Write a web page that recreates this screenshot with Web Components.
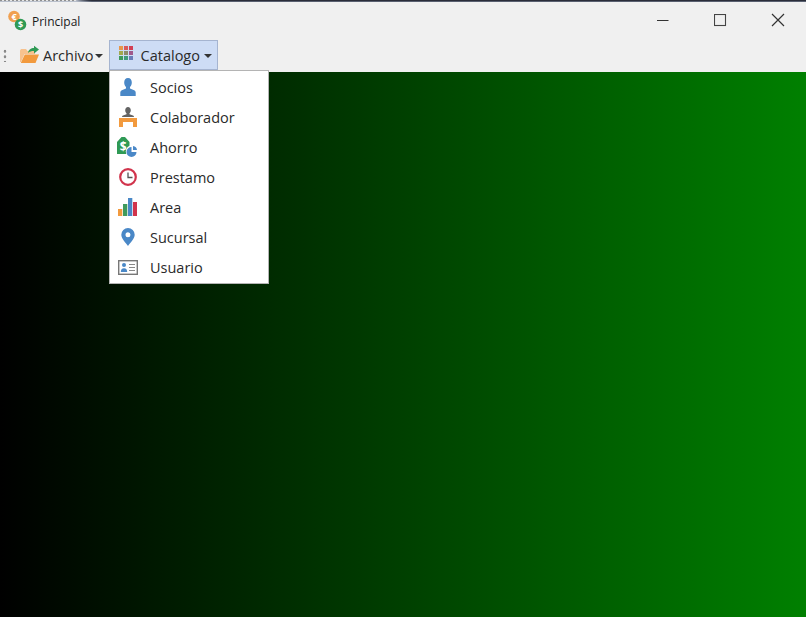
<!DOCTYPE html>
<html lang="es"><head><meta charset="utf-8"><title>Principal</title>
<style>html,body{margin:0;height:100%;background:#f0f0f0;overflow:hidden}body{font-family:"Open Sans","Liberation Sans",sans-serif}</style>
</head><body>
<app-window>
  <title-bar slot="title" label="Principal"></title-bar>
  <tool-bar slot="tools">
    <tool-button label="Archivo" icon="folder"></tool-button>
    <tool-button label="Catalogo" icon="grid" active></tool-button>
  </tool-bar>
  <drop-menu slot="menu">
    <menu-row label="Socios" icon="user"></menu-row>
    <menu-row label="Colaborador" icon="desk"></menu-row>
    <menu-row label="Ahorro" icon="tag"></menu-row>
    <menu-row label="Prestamo" icon="clock"></menu-row>
    <menu-row label="Area" icon="bars"></menu-row>
    <menu-row label="Sucursal" icon="pin"></menu-row>
    <menu-row label="Usuario" icon="card"></menu-row>
  </drop-menu>
</app-window>
<script>
const ICONS={
folder:`<svg width="22" height="20" viewBox="0 0 22 20"><path d="M1 5.500 2 4h5l1.500 2H16v3H5.500L2 17H1z" fill="#f7c28e"/><path d="M5.800 9.500H20L16.500 18H1.800z" fill="#f29a3e"/><path d="M9 8C9.500 4.500 12 3 15 3V.8L20 4.600 15 8.500V6C12.500 6 10.500 6.500 9 8Z" fill="#2f9a55"/></svg>`,
grid:`<svg width="15" height="15" viewBox="0 0 15 15"><g><rect x="0" y="0" width="4" height="4" fill="#e8964a"/><rect x="5" y="0" width="4" height="4" fill="#d85a5a"/><rect x="10" y="0" width="4" height="4" fill="#d23f55"/><rect x="0" y="5" width="4" height="4" fill="#a2a84e"/><rect x="5" y="5" width="4" height="4" fill="#8c8a6a"/><rect x="10" y="5" width="4" height="4" fill="#a0588c"/><rect x="0" y="10" width="4" height="4" fill="#3f9a5c"/><rect x="5" y="10" width="4" height="4" fill="#3f9a7c"/><rect x="10" y="10" width="4" height="4" fill="#6a7cb8"/></g></svg>`,
user:`<svg width="16" height="18" viewBox="0 0 16 18"><path d="M8 0c2.500 0 3.800 2 3.800 4.500 0 2-.9 3.700-1.800 4.500v1.500l4.200 1.800c1 .5 1.500 1.400 1.500 2.500V18H.3v-3.200c0-1.100.5-2 1.500-2.500L6 10.500V9C5.100 8.200 4.200 6.500 4.200 4.500 4.200 2 5.500 0 8 0z" fill="#4a88c7"/></svg>`,
desk:`<svg width="18" height="20" viewBox="0 0 18 20"><path d="M9 0c1.700 0 2.800 1.300 2.800 3.200 0 1.300-.6 2.400-1.300 3v1l3.500 1.300c.7.300 1 .8 1 1.500H3c0-.7.300-1.200 1-1.500l3.500-1.300v-1c-.7-.6-1.300-1.700-1.300-3C6.200 1.300 7.300 0 9 0z" fill="#636363"/><path d="M0 11h18v9h-4v-5H4v5H0z" fill="#f29a3e"/></svg>`,
tag:`<svg width="21" height="20" viewBox="0 0 21 20"><path d="M4.500 0h3.500l4.500 5v12H0V5z" fill="#2f9a55"/><text x="6.300" y="14" font-size="12" font-weight="700" font-family="Open Sans" fill="#fff" text-anchor="middle">$</text><circle cx="15" cy="14.500" r="6.200" fill="#fff"/><path d="M14.500 10v5h5a5 5 0 1 1-5-5z" fill="#4a88c7"/><path d="M16 9a4.500 4.500 0 0 1 4 4h-4z" fill="#4a88c7"/></svg>`,
clock:`<svg width="18" height="18" viewBox="0 0 18 18"><circle cx="9" cy="9" r="7.800" fill="#fff" stroke="#d1344c" stroke-width="2.200"/><path d="M9 4.500V9.500H13.500" fill="none" stroke="#555" stroke-width="1.300"/></svg>`,
bars:`<svg width="19" height="18" viewBox="0 0 19 18"><rect x="0" y="11" width="4.300" height="7" fill="#f29a3e"/><rect x="5" y="6" width="4.300" height="12" fill="#3f9a5c"/><rect x="10" y="0" width="4.300" height="18" fill="#4a88c7"/><rect x="15" y="4" width="4" height="14" fill="#d1344c"/></svg>`,
pin:`<svg width="14" height="18" viewBox="0 0 14 18"><path fill-rule="evenodd" d="M7 0a6.700 6.700 0 0 1 6.700 6.700C13.700 10.500 9 15 7 18 5 15 .3 10.500.3 6.700A6.700 6.700 0 0 1 7 0zm0 4.300a2.500 2.500 0 1 0 0 5 2.500 2.500 0 0 0 0-5z" fill="#4a88c7"/></svg>`,
card:`<svg width="20" height="15" viewBox="0 0 20 15"><rect x=".7" y=".7" width="18.600" height="13.600" fill="#fff" stroke="#777" stroke-width="1.400"/><circle cx="6" cy="5" r="2" fill="#4a88c7"/><path d="M2.800 12c0-2.500 1-3.800 3.200-3.800S9.200 9.500 9.200 12z" fill="#4a88c7"/><path d="M11 4.500h6M11 7.500h6M11 10.500h6" stroke="#888" stroke-width="1.200"/></svg>`,
app:`<svg width="20" height="22" viewBox="0 0 20 22"><circle cx="6" cy="6.500" r="5.800" fill="#f0a050"/><text x="6" y="10" font-size="9" font-weight="700" font-family="Open Sans" fill="#fff" text-anchor="middle">€</text><circle cx="12.500" cy="14.500" r="5.800" fill="#2f9a55"/><text x="12.500" y="18" font-size="9" font-weight="700" font-family="Open Sans" fill="#fff" text-anchor="middle">$</text></svg>`
};
function def(name,css,html){
  customElements.define(name,class extends HTMLElement{
    connectedCallback(){
      if(this.shadowRoot)return;
      const r=this.attachShadow({mode:'open'});
      const a=k=>this.getAttribute(k)||'';
      r.innerHTML=`<style>${css}</style>`+html(a);
    }
  });
}
def('app-window',`
:host{display:grid;grid-template-rows:2px 36px 34px 1fr;height:617px;width:806px;position:relative;background:#f0f0f0}
.edge{background:
 linear-gradient(90deg,transparent 0,transparent 76px,#2a2d3a 92px) 0 0/100% 1px no-repeat,
 repeating-linear-gradient(90deg,#8f8f8f 0,#8f8f8f 2px,#e6e6e6 2px,#e6e6e6 4px) 0 0/76px 1px no-repeat,
 linear-gradient(90deg,#b9c0cc 0,#b9c0cc 76px,#596070 92px,#596070 100%)}
.stage{background:linear-gradient(90deg,#000,#008000);min-height:0}
.pop{position:absolute;left:109px;top:70px}
`,()=>`<div class="edge"></div><slot name="title"></slot><slot name="tools"></slot><div class="stage"></div><div class="pop"><slot name="menu"></slot></div>`);
def('title-bar',`
:host{display:flex;align-items:center;height:36px;font:12px "Open Sans","Liberation Sans",sans-serif;color:#1a1a1a;background:#f0f0f0}
.ic{display:flex;margin-left:8px;width:24px;height:22px;margin-top:2px}
.t{flex:1;margin-top:3px}
.b{width:58px;height:36px;display:flex;align-items:center;justify-content:center}
.b.x{width:56px;margin-left:1px}
svg{display:block}
`,a=>`<span class="ic">${ICONS.app}</span><span class="t">${a('label')}</span>
<span class="b"><svg width="13" height="13"><path d="M1 6.500H12.500" stroke="#333" stroke-width="1"/></svg></span>
<span class="b"><svg width="13" height="13"><rect x=".5" y=".5" width="11" height="11" fill="none" stroke="#444" stroke-width="1.100"/></svg></span>
<span class="b x"><svg width="14" height="14"><path d="M1 1 13 13M13 1 1 13" stroke="#333" stroke-width="1.200"/></svg></span>`);
def('tool-bar',`
:host{display:flex;align-items:flex-start;height:34px;background:#f0f0f0;padding-left:3px;box-sizing:border-box}
.grip{width:4px;height:13px;margin:11px 8px 0 0;background:radial-gradient(circle at 2px 2px,#888 1.300px,transparent 1.600px) 0 0/4px 5.500px repeat-y}
`,()=>`<span class="grip"></span><slot></slot>`);
def('tool-button',`
:host{display:inline-flex;align-items:center;height:30px;margin-top:2px;box-sizing:border-box;border:1px solid transparent;font:14.500px "Open Sans","Liberation Sans",sans-serif;color:#2a2a2a;padding:0 3px 0 3px}
:host([active]){background:#cddcf5;border-color:#a5b4d0;margin-left:2px;padding:0 5px 0 6px}
.i{display:flex;margin-right:2px}
:host([active]) .i{margin:-4px 7px 0 3px}
.c{width:0;height:0;border:4px solid transparent;border-top-color:#333;border-bottom-width:0;margin-left:1px;margin-top:1px}
:host([active]) .c{margin-left:4px}
`,a=>`<span class="i">${ICONS[a('icon')]}</span><span>${a('label')}</span><span class="c"></span>`);
def('drop-menu',`
:host{display:flex;flex-direction:column;width:160px;height:214px;box-sizing:border-box;background:#fff;border:1px solid #b4b4b4;padding:1px 0 0}
`,()=>`<slot></slot>`);
def('menu-row',`
:host{display:flex;align-items:center;height:30px;font:14.500px "Open Sans","Liberation Sans",sans-serif;color:#2a2a2a}
.i{width:40px;display:flex;justify-content:center;box-sizing:border-box;padding-right:5px}
`,a=>`<span class="i">${ICONS[a('icon')]}</span><span>${a('label')}</span>`);
</script>
</body></html>
